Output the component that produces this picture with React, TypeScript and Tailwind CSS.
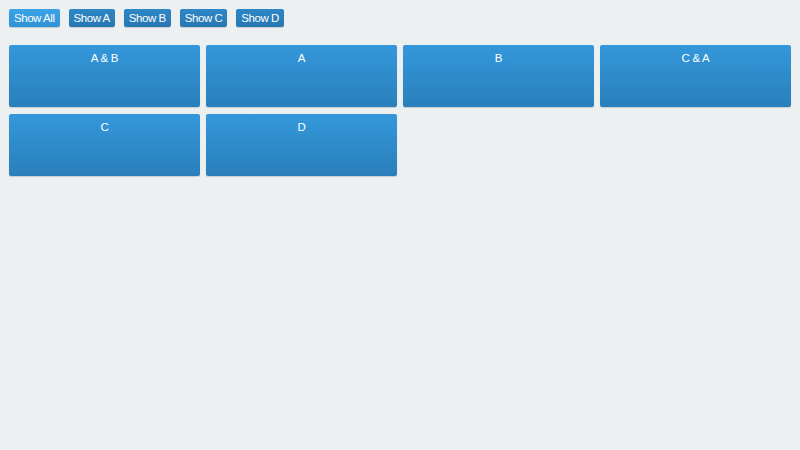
import { useState } from 'react';

const filters = ['All', 'A', 'B', 'C', 'D'];

const items = [
    { label: 'A & B', tags: ['A', 'B'] },
    { label: 'A', tags: ['A'] },
    { label: 'B', tags: ['B'] },
    { label: 'C & A', tags: ['C', 'A'] },
    { label: 'C', tags: ['C'] },
    { label: 'D', tags: ['D'] },
];

export default function App() {
    const [active, setActive] = useState('All');

    const visible = items.filter((item) => active === 'All' || item.tags.includes(active));

    return (
        <div className="min-h-screen w-full bg-[#ecf0f1] font-['Liberation_Sans',Arial,sans-serif]">
            <div className="flex gap-[9px] pl-[9px] pt-[9px]">
                {filters.map((f) => (
                    <button
                        key={f}
                        onClick={() => setActive(f)}
                        className={`h-[18px] px-[5px] rounded-[2px] text-[11.5px] leading-[18px] tracking-[-0.45px] text-white shadow-[0_1px_1px_rgba(0,0,0,0.15)] ${active === f
                                ? 'bg-gradient-to-b from-[#3ba3e7] to-[#3092d6]'
                                : 'bg-gradient-to-b from-[#2e87c6] to-[#2777b1]'
                            }`}
                    >
                        Show {f}
                    </button>
                ))}
            </div>

            <div className="grid grid-cols-4 gap-x-[6px] gap-y-[7px] px-[9px] pt-[18px]">
                {visible.map((item) => (
                    <div
                        key={item.label}
                        className="h-[62px] rounded-[2px] bg-gradient-to-b from-[#3498db] to-[#2a7fba] pt-[6px] text-center text-[11.5px] leading-[14px] tracking-[-0.3px] text-white shadow-[0_1px_1px_rgba(0,0,0,0.15)]"
                    >
                        {item.label}
                    </div>
                ))}
            </div>
        </div>
    );
}
